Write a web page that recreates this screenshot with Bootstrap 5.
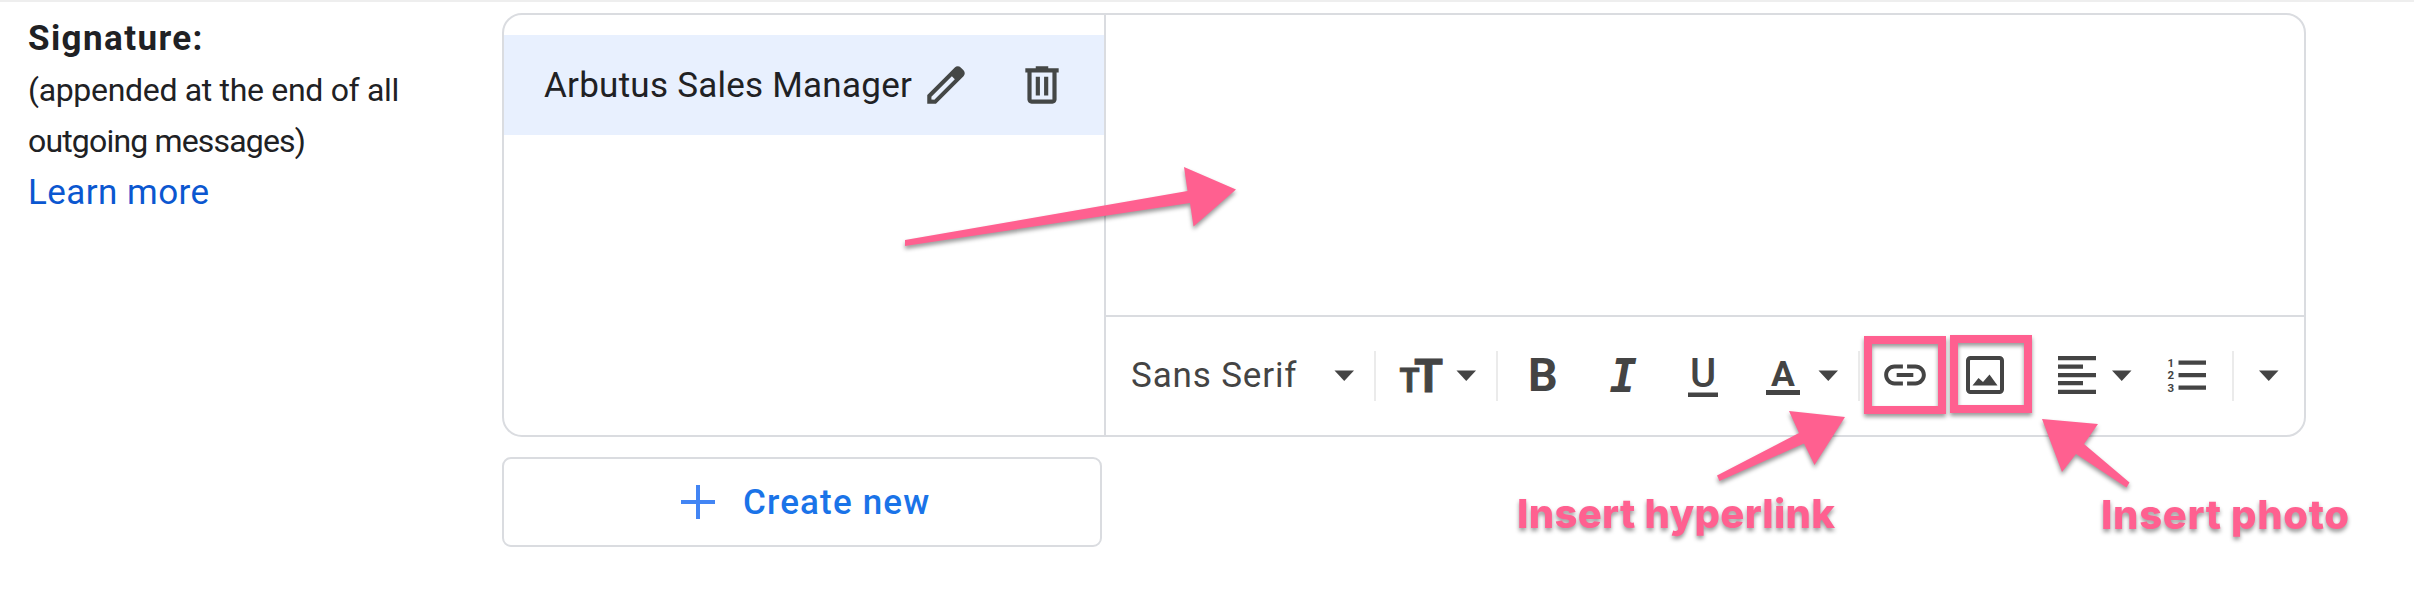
<!DOCTYPE html>
<html lang="en">
<head>
<meta charset="utf-8">
<title>Signature settings</title>
<link href="https://cdn.jsdelivr.net/npm/bootstrap@5.3.0/dist/css/bootstrap.min.css" rel="stylesheet">
<style>
body{font-family:Roboto,"Open Sans",sans-serif;color:#202124;background:#fff;overflow:hidden}
.settings{width:2414px;height:610px;border-top:2px solid #eee;padding-top:11px}
.intro{width:502px;padding-left:28px;font-size:32px;line-height:51.5px;white-space:nowrap}
.intro .ttl{font-size:35px;font-weight:700;letter-spacing:1.4px}
.intro .hint{letter-spacing:-.32px}
.intro .hint.tight{letter-spacing:-.83px}
.intro a{display:block;font-size:35px;line-height:50px;color:#0b57d0;letter-spacing:.45px}
.panel{width:1804px;height:424px;border:2px solid #dadce0;border-radius:20px}
.names{width:602px;border-right:2px solid #dadce0;padding-top:20px}
.entry{height:100px;background:#e8f0fe;padding-left:40px;font-size:35px;white-space:nowrap}
.entry .nm{width:377px;letter-spacing:.25px;padding-top:2px}
.entry .trash{margin-right:37px}
.tools{height:120px;border-top:2px solid #dadce0;color:#444}
.tools svg{display:block;flex:none;fill:#444}
.rule{width:2px;height:50px;background:#ebebeb;flex:none}
.family{width:228px;padding-left:25px;font-size:35px;letter-spacing:.85px}
.create{width:600px;height:90px;margin-top:20px;border:2px solid #dadce0;border-radius:9px;color:#1a73e8;font-size:35px;font-weight:500;padding:0 0 0 177px}
.create:hover{border-color:#dadce0}
.create span{margin-left:28px;padding-top:2px;letter-spacing:1.15px}
.notes{left:0;top:-2px;pointer-events:none;fill:#ff6090;filter:drop-shadow(0 3px 2px rgba(0,0,0,.4));font:800 40px Inter,sans-serif}
</style>
</head>
<body>
<main class="settings d-flex position-relative">
  <section class="intro flex-shrink-0">
    <div class="ttl">Signature:</div>
    <div class="hint">(appended at the end of all</div>
    <div class="hint tight">outgoing messages)</div>
    <a href="#" class="text-decoration-none">Learn more</a>
  </section>
  <section>
    <div class="panel d-flex">
      <div class="names flex-shrink-0">
        <div class="entry d-flex align-items-center">
          <span class="nm">Arbutus Sales Manager</span>
          <svg width="50" height="50" viewBox="0 0 24 24" fill="#444746"><path d="M20.41 4.94l-1.35-1.35c-.78-.78-2.05-.78-2.83 0L3 16.82V21h4.18L20.41 7.77c.79-.78.79-2.05 0-2.83zM6.41 19.06L5 19v-1.36l9.82-9.82 1.41 1.41z"/></svg>
          <svg class="ms-auto trash" width="50" height="50" viewBox="0 0 24 24" fill="#444746"><path d="M15 4V3H9v1H4v2h1v13c0 1.1.9 2 2 2h10c1.1 0 2-.9 2-2V6h1V4h-5zm2 15H7V6h10v13zM9 8h2v9H9zm4 0h2v9h-2z"/></svg>
        </div>
      </div>
      <div class="flex-grow-1 d-flex flex-column justify-content-end">
        <div class="tools d-flex align-items-center">
          <span class="family">Sans Serif</span>
          <svg width="40" height="118" viewBox="1334 317 40 118"><path d="M1334.5 370.5h19.5l-9.75 10.5z"/></svg>
          <i class="rule"></i>
          <svg width="120" height="118" viewBox="1376 317 120 118" font-family="Roboto" font-weight="700"><text x="1399.5" y="391.5" font-size="32.500" stroke="#444" stroke-width=".8">T<tspan x="1414" font-size="47">T</tspan></text><path d="M1456.5 370.5h19.5l-9.75 10.5z"/></svg>
          <i class="rule"></i>
          <svg width="85" height="118" viewBox="1498 317 85 118"><text x="1528" y="391.300" font-family="Roboto" font-weight="700" font-size="46.500">B</text></svg>
          <svg width="80" height="118" viewBox="1583 317 80 118"><text x="1609.500" y="391.500" font-family="DejaVu Sans Mono" font-weight="700" font-style="italic" font-size="45.500">I</text></svg>
          <svg width="80" height="118" viewBox="1663 317 80 118"><text x="1703" y="387" text-anchor="middle" font-family="Roboto" font-weight="500" font-size="40">U</text><path d="M1688 392.500h30v4.500h-30z"/></svg>
          <svg width="115" height="118" viewBox="1743 317 115 118"><text x="1783" y="386" text-anchor="middle" font-family="Roboto" font-weight="700" font-size="35.500">A</text><path d="M1766 390h34v5h-34zM1818.500 370.500h19.500l-9.750 10.500z"/></svg>
          <i class="rule"></i>
          <svg width="85" height="118" viewBox="1860 317 85 118"><path transform="translate(1880 350) scale(2.083)" d="M3.9 12c0-1.71 1.39-3.1 3.1-3.1h4V7H7c-2.76 0-5 2.24-5 5s2.24 5 5 5h4v-1.9H7c-1.71 0-3.1-1.39-3.1-3.1zM8 13h8v-2H8v2zm9-6h-4v1.9h4c1.71 0 3.1 1.39 3.1 3.1s-1.39 3.1-3.1 3.1h-4V17h4c2.76 0 5-2.24 5-5s-2.24-5-5-5z"/></svg>
          <svg width="80" height="118" viewBox="1945 317 80 118"><rect x="1968" y="358" width="34" height="34" rx="2.5" fill="none" stroke="#444" stroke-width="4"/><path d="M1972.5 385.5l6-7.5 4.5 4 6.5-7.500 8 11z"/></svg>
          <svg width="123" height="118" viewBox="2025 317 123 118"><path d="M2058 356h38v4.200h-38zM2058 364.500h25v4.200h-25zM2058 373h38v4.200h-38zM2058 381h25v4.200h-25zM2058 389.800h38v4.200h-38zM2112 370.500h19.500l-9.750 10.500z"/></svg>
          <svg width="84" height="118" viewBox="2148 317 84 118" font-family="Roboto" font-weight="700" font-size="11.500"><text x="2167.500" y="366.500">1</text><text x="2167.500" y="379">2</text><text x="2167.500" y="391.500">3</text><path d="M2178.500 360.500h27.500v4.200h-27.500zM2178.500 373h27.500v4.200h-27.500zM2178.500 385.500h27.500v4.200h-27.500z"/></svg>
          <i class="rule"></i>
          <svg width="68" height="118" viewBox="2234 317 68 118"><path d="M2259 370.500h19.500l-9.750 10.500z"/></svg>
        </div>
      </div>
    </div>
    <button type="button" class="btn create d-flex align-items-center">
      <svg width="34" height="34" viewBox="0 0 34 34" fill="#4285f4"><path d="M15 0h4v15h15v4H19v15h-4V19H0v-4h15z"/></svg>
      <span>Create new</span>
    </button>
  </section>
  <svg class="notes position-absolute" width="2414" height="610" viewBox="0 0 2414 610">
    <path d="M905 240L1187.500 191 1184 167 1236 189.500 1193.500 226.500 1190 203 905 246z"/>
    <path d="M1717 475.500L1799 433 1789 411 1845 417 1814.500 465 1804 443.500 1719.500 481z"/>
    <path d="M2042 419L2098 424 2084 444 2129.500 482.500 2126.500 487.500 2076 454 2062 472z"/>
    <g fill="none" stroke="#ff6090" stroke-width="8"><path d="M1868 340h74v70h-74zM1954 339h74v70h-74z"/></g>
    <text x="1517" y="528" textLength="318">Insert hyperlink</text>
    <text x="2101" y="529" textLength="248">Insert photo</text>
  </svg>
</main>
<script src="https://cdn.jsdelivr.net/npm/bootstrap@5.3.0/dist/js/bootstrap.bundle.min.js"></script>
</body>
</html>
